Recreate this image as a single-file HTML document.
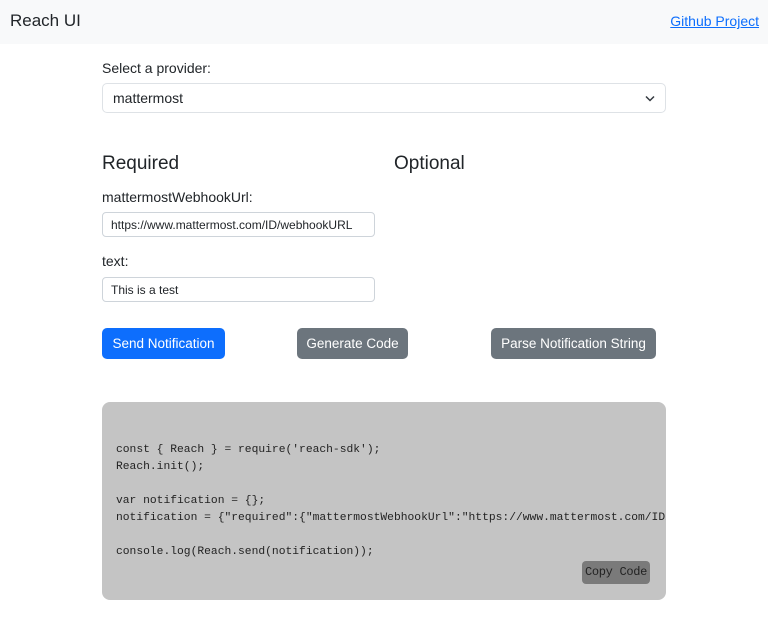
<!DOCTYPE html>
<html><head><meta charset="utf-8"><style>
*{box-sizing:border-box;margin:0;padding:0}
body{width:768px;height:637px;background:#fff;font-family:"Liberation Sans",sans-serif;color:#212529;position:relative;overflow:hidden}
.nav{position:absolute;left:0;top:0;width:768px;height:44px;background:#f8f9fa}
.brand{position:absolute;left:10px;top:11px;font-size:17px;color:#212529}
.gh{position:absolute;right:9px;top:13px;font-size:14px;color:#0d6efd;text-decoration:underline}
.abs{position:absolute}
.lbl{font-size:14px}
.sel{left:102px;top:83px;width:564px;height:30px;border:1px solid #dee2e6;border-radius:5px;font-size:14px;padding:6px 10px}
.h{font-size:19px;font-weight:500}
.inp{left:102px;width:273px;height:25px;border:1px solid #ced4da;border-radius:4px;font-size:12px;padding:5px 8px}
.btn{top:328px;height:31px;border-radius:5px;color:#fff;font-size:13.5px;text-align:center;line-height:31px}
.code{left:102px;top:402px;width:564px;height:198px;background:#c4c4c4;border-radius:8px;overflow:hidden}
pre{position:absolute;left:14px;top:40px;font-family:"Liberation Mono",monospace;font-size:11.3px;line-height:17px;color:#222;white-space:pre}
.copy{left:480px;top:159px;width:68px;height:23px;background:#7a7a7a;border-radius:4px;font-family:"Liberation Mono",monospace;font-size:12px;color:#222;text-align:center;line-height:23px;letter-spacing:-0.3px}
</style></head><body>
<div class="nav"><span class="brand">Reach UI</span><span class="gh">Github Project</span></div>
<div class="abs lbl" style="left:102px;top:60px">Select a provider:</div>
<div class="abs sel">mattermost
<svg class="abs" style="right:10px;top:11px" width="10" height="7" viewBox="0 0 10 7"><path d="M1 1.5l4 4 4-4" fill="none" stroke="#343a40" stroke-width="1.5"/></svg></div>
<div class="abs h" style="left:102px;top:153px">Required</div>
<div class="abs h" style="left:394px;top:153px">Optional</div>
<div class="abs lbl" style="left:102px;top:189px">mattermostWebhookUrl:</div>
<div class="abs inp" style="top:212px">https://www.mattermost.com/ID/webhookURL</div>
<div class="abs lbl" style="left:102px;top:253px">text:</div>
<div class="abs inp" style="top:277px">This is a test</div>
<div class="abs btn" style="left:102px;width:123px;background:#0d6efd">Send Notification</div>
<div class="abs btn" style="left:297px;width:111px;background:#6c757d">Generate Code</div>
<div class="abs btn" style="left:491px;width:165px;background:#6c757d">Parse Notification String</div>
<div class="abs code"><pre>const { Reach } = require('reach-sdk');
Reach.init();

var notification = {};
notification = {"required":{"mattermostWebhookUrl":"https://www.mattermost.com/ID/webhookURL","text":"This is a test"}};

console.log(Reach.send(notification));</pre>
<div class="abs copy">Copy Code</div></div>
</body></html>
